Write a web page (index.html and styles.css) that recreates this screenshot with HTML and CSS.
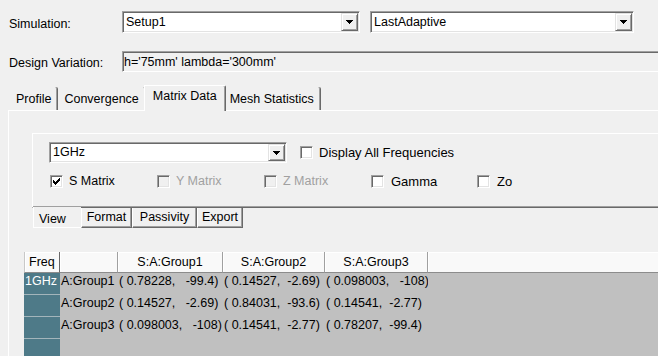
FILE: index.html
```html
<!DOCTYPE html>
<html>
<head>
<meta charset="utf-8">
<title>Matrix Data</title>
<link rel="stylesheet" href="styles.css">
</head>
<body>
<div class="app">
  <div class="row r-sim">
    <span class="lbl">Simulation:</span>
    <div class="combo w-setup">
      <span class="val">Setup1</span>
      <span class="dd"><svg width="7" height="4" viewBox="0 0 7 4"><path d="M0 0h7v1H0zM1 1h5v1H1zM2 2h3v1H2zM3 3h1v1H3z"/></svg></span>
    </div>
    <div class="combo w-adapt">
      <span class="val">LastAdaptive</span>
      <span class="dd"><svg width="7" height="4" viewBox="0 0 7 4"><path d="M0 0h7v1H0zM1 1h5v1H1zM2 2h3v1H2zM3 3h1v1H3z"/></svg></span>
    </div>
  </div>
  <div class="row r-var">
    <span class="lbl">Design Variation:</span>
    <div class="field">h='75mm' lambda='300mm'</div>
  </div>
  <div class="tabs">
    <div class="tab">Profile</div>
    <div class="tab">Convergence</div>
    <div class="tab sel">Matrix Data</div>
    <div class="tab">Mesh Statistics</div>
  </div>
  <div class="panel">
    <div class="inner">
      <div class="irow">
        <div class="combo w-freq">
          <span class="val">1GHz</span>
          <span class="dd"><svg width="7" height="4" viewBox="0 0 7 4"><path d="M0 0h7v1H0zM1 1h5v1H1zM2 2h3v1H2zM3 3h1v1H3z"/></svg></span>
        </div>
        <span class="chk c-all"><span class="box"></span>Display All Frequencies</span>
      </div>
      <div class="crow">
        <span class="chk"><span class="box"><svg width="7" height="7" viewBox="0 0 7 7"><path d="M6 0h1v1H6zM5 1h2v1H5zM0 2h1v1H0zM4 2h3v1H4zM0 3h2v1H0zM3 3h3v1H3zM0 4h5v1H0zM1 5h3v1H1zM2 6h1v1H2z"/></svg></span>S Matrix</span>
        <span class="chk dis"><span class="box"></span>Y Matrix</span>
        <span class="chk dis"><span class="box"></span>Z Matrix</span>
        <span class="chk wide"><span class="box"></span>Gamma</span>
        <span class="chk wide"><span class="box"></span>Zo</span>
      </div>
    </div>
    <div class="subtabs">
      <div class="st sel">View</div>
      <div class="st w-format">Format</div>
      <div class="st w-pass">Passivity</div>
      <div class="st w-export">Export</div>
    </div>
    <div class="grid">
      <div class="h freq">Freq</div>
      <div class="h"></div>
      <div class="h">S:A:Group1</div>
      <div class="h">S:A:Group2</div>
      <div class="h">S:A:Group3</div>
      <div class="h last"></div>

      <div class="rh">1GHz</div>
      <div class="c">A:Group1</div>
      <div class="c">( 0.78228,   -99.4)</div>
      <div class="c">( 0.14527,  -2.69)</div>
      <div class="c">( 0.098003,   -108)</div>
      <div class="c"></div>

      <div class="rh"></div>
      <div class="c">A:Group2</div>
      <div class="c">( 0.14527,   -2.69)</div>
      <div class="c">( 0.84031,  -93.6)</div>
      <div class="c">( 0.14541,  -2.77)</div>
      <div class="c"></div>

      <div class="rh"></div>
      <div class="c">A:Group3</div>
      <div class="c">( 0.098003,   -108)</div>
      <div class="c">( 0.14541,  -2.77)</div>
      <div class="c">( 0.78207,  -99.4)</div>
      <div class="c"></div>

      <div class="rh"></div>
      <div class="c"></div>
      <div class="c"></div>
      <div class="c"></div>
      <div class="c"></div>
      <div class="c"></div>
    </div>
  </div>
</div>
</body>
</html>
```

FILE: styles.css
```css
* { box-sizing: border-box; margin: 0; padding: 0; }
html, body { width: 658px; height: 356px; overflow: hidden; background: #f0f0f0; }
body { font-family: "Liberation Sans", Arial, sans-serif; font-size: 12.5px; color: #000; line-height: 1; }

.app { width: 658px; height: 356px; display: flex; flex-direction: column; overflow: hidden; }

.row { display: flex; align-items: center; flex: none; }
.r-sim { margin-top: 11px; height: 22px; }
.r-var { margin-top: 18px; height: 21px; }
.lbl { flex: none; width: 122px; padding-left: 9px; padding-top: 4px; white-space: nowrap; }

.combo {
  flex: none; display: flex; align-items: stretch; height: 22px; background: #fff;
  border: 1px solid; border-color: #a0a0a0 #fff #fff #a0a0a0;
  box-shadow: inset 1px 1px 0 #696969, inset -1px -1px 0 #e3e3e3;
  padding: 1px;
}
.val { flex: 1; display: flex; align-items: center; padding-left: 2px; white-space: nowrap; }
.dd {
  flex: none; width: 17px; background: #f0f0f0;
  border: 1px solid; border-color: #e3e3e3 #696969 #696969 #e3e3e3;
  box-shadow: inset 1px 1px 0 #fff, inset -1px -1px 0 #a0a0a0;
  display: flex; align-items: center; justify-content: center;
}
.dd svg { display: block; fill: #000; }
.w-setup { width: 238px; }
.w-adapt { width: 264px; margin-left: 10px; }
.w-freq { width: 238px; height: 21px; }

.field {
  flex: none; width: 560px; height: 21px; display: flex; align-items: center;
  padding: 2px 0 0 1px; white-space: nowrap;
  border: 1px solid; border-color: #a0a0a0 transparent #fff #a0a0a0;
  box-shadow: inset 1px 1px 0 #696969;
}

.tabs { flex: none; display: flex; align-items: flex-end; height: 25px; margin-top: 13px; padding-left: 10px; position: relative; z-index: 1; }
.tab {
  height: 23px; display: flex; align-items: center; padding: 1px 6px 0 6px; white-space: nowrap;
  border-right: 1px solid #696969; box-shadow: inset -1px 0 0 #a0a0a0;
  border-top-right-radius: 2px;
}
.tab.sel {
  height: 26px; align-items: flex-start; padding: 4px 8px 0 8px; margin: 0 -2px -1px -2px;
  background: #f0f0f0; border-top: 1px solid #fff; border-left: 1px solid #fff;
  position: relative;
}

.panel { flex: 1; min-height: 0; margin-left: 8px; border-left: 1px solid #fff; border-top: 1px solid #fff; padding-left: 15px; display: flex; flex-direction: column; }

.inner {
  flex: none; margin: 22px 0 0 8px; height: 75px;
  border-top: 1px solid #fff; border-left: 1px solid #fff; border-bottom: 1px solid #696969;
  box-shadow: inset 0 -1px 0 #a0a0a0;
  padding: 8px 0 0 16px;
}
.irow { display: flex; align-items: center; height: 21px; }
.c-all { margin-left: 13px; font-size: 13px; }
.crow { display: flex; align-items: center; height: 13px; margin-top: 12px; padding-left: 1px; }
.chk { display: flex; align-items: center; gap: 6px; white-space: nowrap; }
.crow .chk { width: 107px; flex: none; }
.crow .chk.wide { font-size: 13px; width: 106px; gap: 7px; }
.box {
  width: 13px; height: 13px; flex: none; background: #fff;
  border: 1px solid; border-color: #a0a0a0 #fff #fff #a0a0a0;
  box-shadow: inset 1px 1px 0 #696969, inset -1px -1px 0 #e3e3e3;
  display: flex; align-items: center; justify-content: center;
}
.box svg { display: block; fill: #000; }
.dis { color: #a0a0a0; }
.dis .box { background: #f0f0f0; }

.subtabs { flex: none; display: flex; align-items: flex-start; height: 21px; margin: -1px 0 0 9px; }
.st {
  height: 20px; margin-top: 1px; display: flex; align-items: center; justify-content: center;
  border-left: 1px solid #fff; border-right: 1px solid #696969; border-bottom: 1px solid #696969;
  box-shadow: inset -1px -1px 0 #a0a0a0; white-space: nowrap;
}
.st.sel {
  width: 48px; height: 21px; margin-top: 0; justify-content: flex-start; align-items: flex-start;
  padding: 6px 0 0 5px; background: #f0f0f0;
  border-right: none; border-bottom: 1px solid #fff; box-shadow: none;
}
.w-format { width: 51px; }
.w-pass { width: 65px; }
.w-export { width: 46px; }

.grid {
  flex: none; margin-top: 24px; width: 634px;
  display: grid; grid-template-columns: 36px 58px 105px 102px 103px 1fr;
  grid-template-rows: 21px repeat(4, 22px);
  font-size: 12.5px;
}
.h {
  background: #f9f9f9; border-right: 1px solid #a0a0a0; border-bottom: 1px solid #8c8c8c;
  box-shadow: inset 1px 1px 0 #fff;
  display: flex; align-items: center; justify-content: center; white-space: nowrap;
}
.h.freq { justify-content: flex-start; padding-left: 4px; border-right-color: #696969; border-left: 1px solid #c8c8c8; }
.h.last { border-right: none; }
.rh { background: #4e7a88; color: #fff; border-bottom: 1px solid #a3b5bb; line-height: 16px; padding-left: 1px; }
.c { background: #c0c0c0; white-space: pre; line-height: 16px; padding-left: 1px; }
```
